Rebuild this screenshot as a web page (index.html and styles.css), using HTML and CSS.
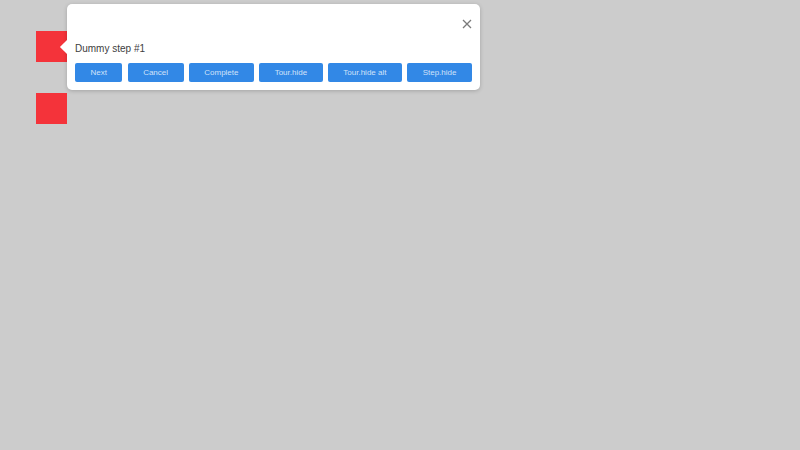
FILE: index.html
```html
<!DOCTYPE html>
<html>
<head>
<meta charset="utf-8">
<link rel="stylesheet" href="styles.css">
</head>
<body>
<div class="targets">
  <div class="target"></div>
  <div class="target"></div>
</div>
<div class="step">
  <div class="arrow"></div>
  <div class="header">
    <button class="close" aria-label="Close">
      <svg width="10" height="10" viewBox="0 0 10 10"><path d="M1 1 L9 9 M9 1 L1 9" stroke="#7a7a7a" stroke-width="1.3" fill="none"/></svg>
    </button>
  </div>
  <div class="text">Dummy step #1</div>
  <div class="footer">
    <button class="btn">Next</button>
    <button class="btn">Cancel</button>
    <button class="btn">Complete</button>
    <button class="btn">Tour.hide</button>
    <button class="btn">Tour.hide alt</button>
    <button class="btn">Step.hide</button>
  </div>
</div>
</body>
</html>
```

FILE: styles.css
```css
html, body {
  margin: 0;
  padding: 0;
  background: #cccccc;
  width: 800px;
  height: 450px;
  overflow: hidden;
  font-family: "Liberation Sans", Arial, sans-serif;
}
.targets {
  display: flex;
  flex-direction: column;
  gap: 31px;
  padding: 31px 0 0 36px;
}
.target {
  width: 31px;
  height: 31px;
  background: #f4333a;
}
.step {
  position: absolute;
  left: 67px;
  top: 4px;
  width: 413px;
  height: 86px;
  box-sizing: border-box;
  background: #fff;
  border-radius: 5px;
  box-shadow: 0 1px 4px rgba(0,0,0,0.2);
  display: flex;
  flex-direction: column;
}
.arrow {
  position: absolute;
  left: -5px;
  top: 38px;
  width: 10px;
  height: 10px;
  background: #fff;
  transform: rotate(45deg);
}
.header {
  height: 38px;
  display: flex;
  justify-content: flex-end;
  align-items: center;
  padding-right: 8px;
}
.close {
  border: 0;
  background: transparent;
  padding: 0;
  width: 10px;
  height: 10px;
  display: flex;
  margin-top: 1px;
}
.text {
  position: relative;
  padding: 0 8px;
  font-size: 10px;
  line-height: 13px;
  height: 13px;
  color: #404040;
}
.footer {
  display: flex;
  gap: 5.2px;
  padding: 8px 8px 0 8px;
}
.btn {
  border: 0;
  border-radius: 2px;
  background: #3288e6;
  color: rgba(255,255,255,0.78);
  font-family: "Liberation Sans", Arial, sans-serif;
  font-size: 8px;
  height: 19px;
  line-height: 19px;
  padding: 0 15.5px;
  margin: 0;
}
```
